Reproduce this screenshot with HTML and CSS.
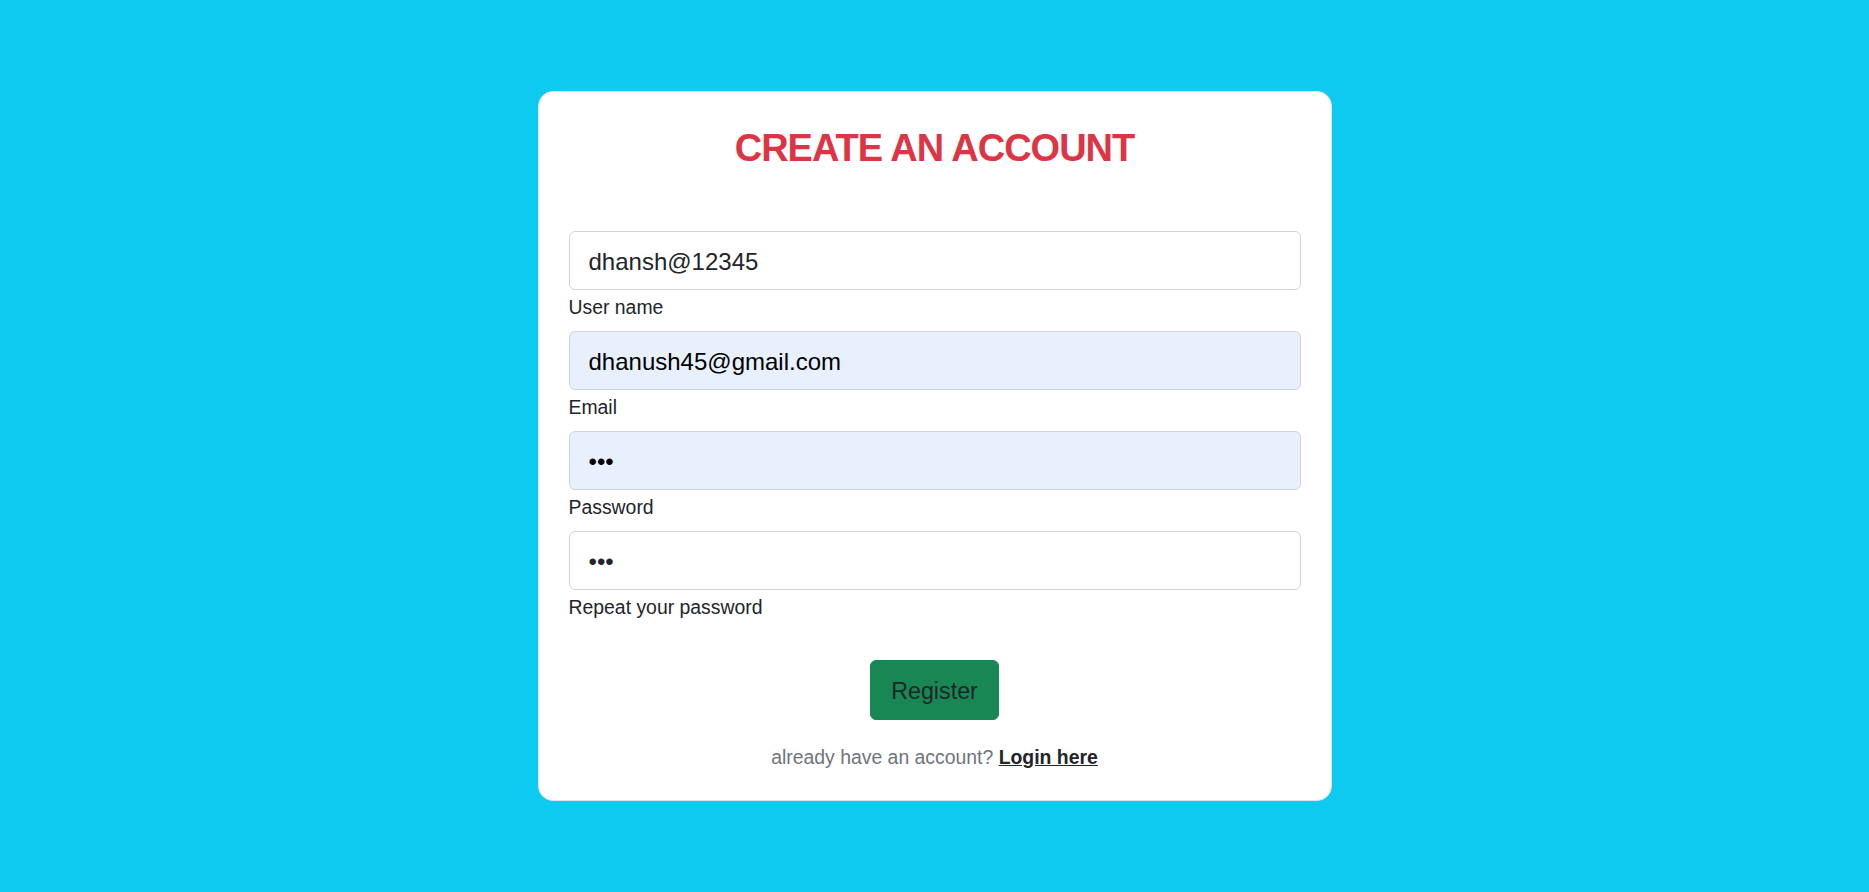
FILE: index.html
```html
<!DOCTYPE html>
<html lang="en">
<head>
<meta charset="utf-8">
<title>Create an account</title>
<link rel="stylesheet" href="styles.css">
</head>
<body>
<main class="page">
  <section class="card">
    <h2 class="title">CREATE AN ACCOUNT</h2>
    <form class="form">
      <div class="group">
        <input class="field" type="text" id="uname" value="dhansh@12345">
        <label class="label" for="uname">User name</label>
      </div>
      <div class="group">
        <input class="field field-filled" type="email" id="email" value="dhanush45@gmail.com">
        <label class="label" for="email">Email</label>
      </div>
      <div class="group">
        <input class="field field-filled" type="password" id="pw" value="123">
        <label class="label" for="pw">Password</label>
      </div>
      <div class="group">
        <input class="field" type="password" id="pw2" value="123">
        <label class="label" for="pw2">Repeat your password</label>
      </div>
      <div class="actions">
        <button class="btn" type="button">Register</button>
      </div>
      <p class="footer">already have an account? <a class="login" href="#">Login here</a></p>
    </form>
  </section>
</main>
</body>
</html>
```
FILE: styles.css
```css
* {
  box-sizing: border-box;
}

html, body {
  margin: 0;
  padding: 0;
}

body {
  background: #0dcaf0;
  font-family: "Liberation Sans", Arial, sans-serif;
  color: #212529;
}

.page {
  height: 100vh;
  display: flex;
  align-items: center;
  justify-content: center;
}

.card {
  width: 794px;
  background: #fff;
  border: 1px solid #dee2e6;
  border-radius: 15px;
  padding: 34px 30px 28px;
}

.title {
  margin: 0 0 59px;
  text-align: center;
  color: #dc3545;
  font-size: 38px;
  font-weight: 700;
  letter-spacing: -1px;
  line-height: 45.6px;
}

.form {
  margin: 0;
}

.group {
  display: flex;
  flex-direction: column;
}

.field {
  display: block;
  width: 100%;
  height: 59.5px;
  padding: 4px 19px 0;
  font-family: "Liberation Sans", Arial, sans-serif;
  font-size: 24px;
  color: #212529;
  background: #fff;
  border: 1.2px solid #ced4da;
  border-radius: 6px;
  outline: none;
}

.field-filled {
  background: #e8f0fe;
  color: #000;
}

.label {
  display: block;
  font-size: 19.4px;
  line-height: 30px;
  padding-top: 1.5px;
  margin-bottom: 9px;
  color: #212529;
}

.actions {
  display: flex;
  justify-content: center;
  margin-top: 29.7px;
}

.btn {
  height: 59.7px;
  padding: 2px 20.5px 0;
  font-family: "Liberation Sans", Arial, sans-serif;
  font-size: 23.3px;
  color: #212529;
  background: #198754;
  border: 1px solid #198754;
  border-radius: 6px;
  cursor: pointer;
}

.footer {
  margin: 22px 0 0;
  text-align: center;
  font-size: 19.4px;
  line-height: 30px;
  color: #6c757d;
}

.login {
  color: #212529;
  font-weight: 700;
  text-decoration: underline;
}
```
